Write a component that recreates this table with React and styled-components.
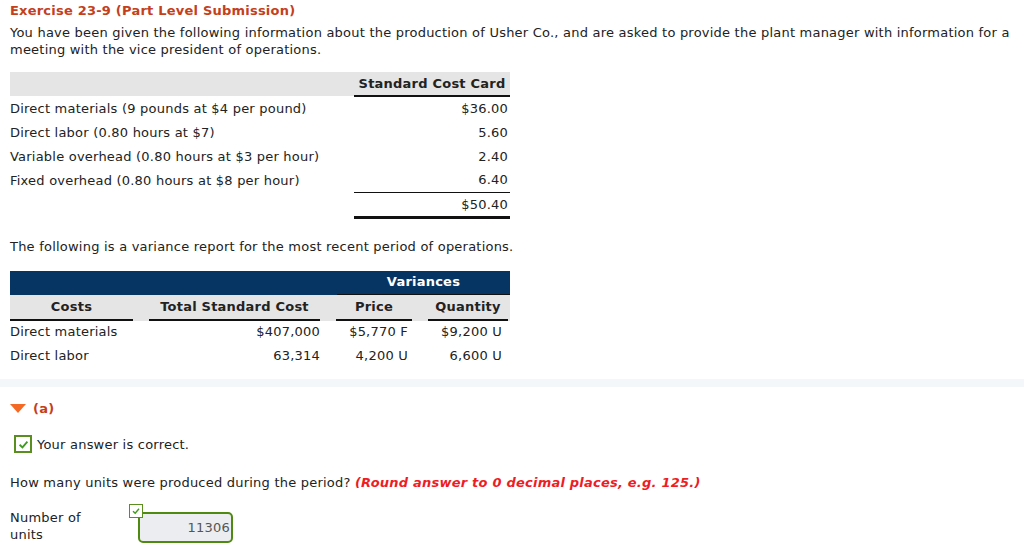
import React from 'react';
import styled, { createGlobalStyle } from 'styled-components';

const GlobalStyle = createGlobalStyle`
    body {
        margin: 0;
        background: #fff;
        color: #222;
        font-family: 'DejaVu Sans', Verdana, sans-serif;
        font-size: 13px;
        line-height: 17px;
        letter-spacing: 0.22px;
    }
`;

const Section = styled.div`
    padding: ${({ top }) => top || 0}px 10px 0 10px;
`;

const Title = styled.h1`
    margin: 0;
    font-size: 13px;
    line-height: 17px;
    font-weight: bold;
    color: #c4401c;
`;

const Text = styled.p`
    margin: ${({ top }) => top || 0}px 0 0 0;
`;

const CostTable = styled.table`
    width: 500px;
    border-collapse: collapse;
    margin-top: 14px;
`;

const HeadRow = styled.tr`
    background: #e5e5e5;
`;

const Th = styled.th`
    height: 23px;
    padding: 0;
    font-weight: bold;
    text-align: center;
    border-bottom: ${({ ruled }) => (ruled ? '2px solid #111' : 'none')};
`;

const Td = styled.td`
    height: 23.7px;
    padding: 0 ${({ padRight }) => padRight || 0}px 0 0;
    text-align: ${({ right }) => (right ? 'right' : 'left')};
    border-top: ${({ topRule }) => (topRule ? '1px solid #111' : 'none')};
    border-bottom: ${({ bottomRule }) => (bottomRule ? '3px solid #111' : 'none')};
`;

const VarianceTable = styled.div`
    width: 500px;
    margin-top: 16px;
`;

const NavyRow = styled.div`
    display: flex;
    justify-content: flex-end;
    height: 24px;
    background: #063563;
`;

const NavyCell = styled.div`
    width: 173px;
    color: #fff;
    font-weight: bold;
    text-align: center;
    line-height: 22px;
    border-bottom: 1px solid #111;
`;

const Grid = styled.div`
    display: grid;
    grid-template-columns: 123px 171px 76px 80px;
    column-gap: 16px;
    background: ${({ gray }) => (gray ? '#e5e5e5' : 'transparent')};
`;

const HeadCell = styled.div`
    height: 24px;
    line-height: 24px;
    font-weight: bold;
    text-align: center;
    border-bottom: 2px solid #111;
`;

const Cell = styled.div`
    height: 24px;
    line-height: 21px;
    text-align: ${({ right }) => (right ? 'right' : 'left')};
    padding-right: ${({ padRight }) => padRight || 0}px;
`;

const Band = styled.div`
    height: 8px;
    margin-top: 10px;
    background: #f3f7fa;
`;

const PartHeader = styled.div`
    display: flex;
    align-items: center;
    gap: 7px;
    margin-top: 13px;
    font-weight: bold;
    color: #c4401c;
`;

const Triangle = styled.span`
    width: 0;
    height: 0;
    border-left: 8px solid transparent;
    border-right: 8px solid transparent;
    border-top: 9px solid #f46a25;
`;

const Correct = styled.div`
    display: flex;
    align-items: center;
    gap: 5px;
    margin-top: 18px;
    padding-left: 4px;
`;

const CheckBox = styled.span`
    box-sizing: border-box;
    width: ${({ size }) => size}px;
    height: ${({ size }) => size}px;
    border: ${({ thick }) => (thick ? 2 : 1)}px solid #5a8f1f;
    background: #fff;
    display: flex;
    align-items: center;
    justify-content: center;
`;

const Question = styled.p`
    margin: 21px 0 0 0;
`;

const Note = styled.em`
    color: #ee1c25;
    font-weight: bold;
`;

const AnswerRow = styled.div`
    display: flex;
    align-items: flex-start;
    margin-top: 18px;
`;

const Label = styled.div`
    width: 128px;
`;

const InputWrap = styled.div`
    position: relative;
    margin-top: 3px;
`;

const Badge = styled.div`
    position: absolute;
    left: -9px;
    top: -8px;
`;

const Input = styled.div`
    box-sizing: border-box;
    width: 95px;
    height: 31px;
    border: 2px solid #4f8a10;
    border-radius: 5px;
    background: #ebedf0;
    color: #555;
    text-align: right;
    line-height: 27px;
    padding-right: 1px;
`;

function Check({ size }) {
    return (
        <svg width={size} height={size} viewBox="0 0 10 10">
            <path d="M2 5.2 L4.2 7.2 L8 2.8" fill="none" stroke="#3f9a1f" strokeWidth="1.4" />
        </svg>
    );
}

const costs = [
    ['Direct materials (9 pounds at $4 per pound)', '$36.00'],
    ['Direct labor (0.80 hours at $7)', '5.60'],
    ['Variable overhead (0.80 hours at $3 per hour)', '2.40'],
    ['Fixed overhead (0.80 hours at $8 per hour)', '6.40'],
];

const variances = [
    ['Direct materials', '$407,000', '$5,770 F', '$9,200 U'],
    ['Direct labor', '63,314', '4,200 U', '6,600 U'],
];

export default function App() {
    return (
        <>
            <GlobalStyle />
            <Section top={2}>
                <Title>Exercise 23-9 (Part Level Submission)</Title>
                <Text top={5}>
                    You have been given the following information about the production of Usher Co., and are asked to provide the plant manager with information for a meeting with the vice president of operations.
                </Text>
                <CostTable>
                    <tbody>
                        <HeadRow>
                            <Th />
                            <Th ruled style={{ width: 156 }}>Standard Cost Card</Th>
                        </HeadRow>
                        {costs.map(([name, value]) => (
                            <tr key={name}>
                                <Td>{name}</Td>
                                <Td right padRight={2}>{value}</Td>
                            </tr>
                        ))}
                        <tr>
                            <Td />
                            <Td right padRight={2} topRule bottomRule>$50.40</Td>
                        </tr>
                    </tbody>
                </CostTable>
                <Text top={19}>The following is a variance report for the most recent period of operations.</Text>
                <VarianceTable>
                    <NavyRow>
                        <NavyCell>Variances</NavyCell>
                    </NavyRow>
                    <Grid gray>
                        <HeadCell>Costs</HeadCell>
                        <HeadCell>Total Standard Cost</HeadCell>
                        <HeadCell>Price</HeadCell>
                        <HeadCell>Quantity</HeadCell>
                    </Grid>
                    {variances.map(([name, total, price, qty]) => (
                        <Grid key={name}>
                            <Cell>{name}</Cell>
                            <Cell right>{total}</Cell>
                            <Cell right padRight={4}>{price}</Cell>
                            <Cell right padRight={6}>{qty}</Cell>
                        </Grid>
                    ))}
                </VarianceTable>
            </Section>
            <Band />
            <Section>
                <PartHeader>
                    <Triangle />
                    (a)
                </PartHeader>
                <Correct>
                    <CheckBox size={18} thick>
                        <Check size={13} />
                    </CheckBox>
                    Your answer is correct.
                </Correct>
                <Question>
                    How many units were produced during the period? <Note>(Round answer to 0 decimal places, e.g. 125.)</Note>
                </Question>
                <AnswerRow>
                    <Label>Number of<br />units</Label>
                    <InputWrap>
                        <Badge>
                            <CheckBox size={14}>
                                <Check size={10} />
                            </CheckBox>
                        </Badge>
                        <Input>11306</Input>
                    </InputWrap>
                </AnswerRow>
            </Section>
        </>
    );
}
